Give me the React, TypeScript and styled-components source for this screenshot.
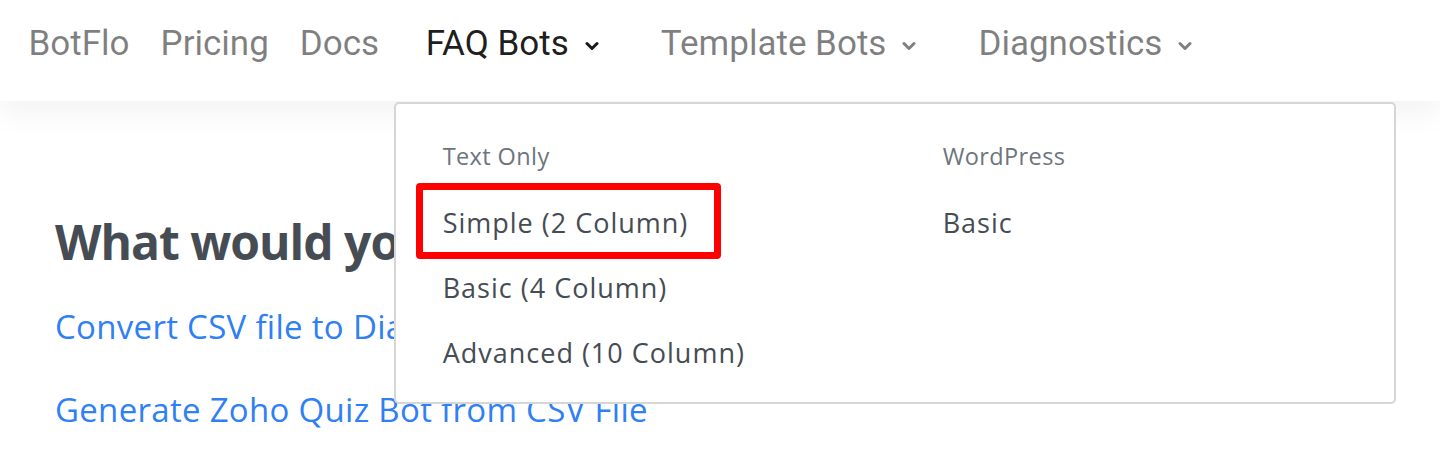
import styled, { createGlobalStyle } from 'styled-components';

const GlobalStyle = createGlobalStyle`
  html, body {
    margin: 0;
    padding: 0;
    background: #fff;
  }
  body {
    font-family: 'Open Sans', 'Liberation Sans', sans-serif;
    overflow: hidden;
  }
`;

const Navbar = styled.nav`
  position: relative;
  z-index: 2;
  display: flex;
  align-items: stretch;
  height: 101px;
  padding-left: 13px;
  background: #fff;
  box-shadow: 0 12px 28px rgba(0, 0, 0, 0.05);
`;

const NavItem = styled.div<{ $dropdown?: boolean }>`
  position: relative;
  display: flex;
  align-items: center;
  padding: 0 ${(p) => (p.$dropdown ? '31px' : '15.5px')};
`;

const NavLink = styled.a<{ $active?: boolean }>`
  display: flex;
  align-items: center;
  gap: 16px;
  padding-bottom: 14px;
  font-family: Roboto, 'Liberation Sans', sans-serif;
  font-size: 35px;
  color: ${(p) => (p.$active ? 'rgba(0, 0, 0, 0.9)' : 'rgba(0, 0, 0, 0.5)')};
  text-decoration: none;
  cursor: pointer;

  svg {
    width: 14px;
    height: 10px;
    margin-top: 4px;
  }
`;

const Menu = styled.div`
  position: absolute;
  top: calc(100% + 1px);
  left: -1px;
  display: grid;
  grid-template-columns: 500px 1fr;
  width: 1002px;
  height: 302px;
  box-sizing: border-box;
  padding: 36px 0 0 47px;
  background: #fff;
  border: 2px solid #d6d6d6;
  border-radius: 5px;
`;

const MenuColumn = styled.div`
  display: flex;
  flex-direction: column;
`;

const MenuHeader = styled.div`
  height: 50px;
  font-size: 23.5px;
  color: #6c757d;
  letter-spacing: 0.4px;
`;

const MenuItem = styled.a<{ $marked?: boolean }>`
  position: relative;
  align-self: flex-start;
  height: 65px;
  line-height: 65px;
  font-size: 27px;
  letter-spacing: 1px;
  color: #454c54;
  text-decoration: none;

  ${(p) =>
    p.$marked &&
    `
    &::after {
      content: '';
      position: absolute;
      top: -7px;
      bottom: -4px;
      left: -27px;
      right: -33px;
      border: 7px solid #f00;
      border-radius: 4px;
    }
  `}
`;

const Main = styled.main`
  padding: 111px 0 0 55px;
`;

const Heading = styled.h1`
  margin: 0 0 33px;
  font-size: 48px;
  font-weight: 700;
  line-height: 60px;
  color: #464c53;
  letter-spacing: -1px;
`;

const LinkList = styled.div`
  display: flex;
  flex-direction: column;
  gap: 39px;
`;

const ToolLink = styled.a`
  font-size: 33px;
  line-height: 44px;
  letter-spacing: 0.3px;
  color: #2f80f4;
  text-decoration: none;
`;

const Chevron = () => (
  <svg viewBox="0 0 14 10" fill="none">
    <path d="M2 2.5 7 7.5 12 2.5" stroke="currentColor" strokeWidth="3" strokeLinecap="round" strokeLinejoin="round" />
  </svg>
);

const App = () => (
  <>
    <GlobalStyle />
    <Navbar>
      <NavItem>
        <NavLink>BotFlo</NavLink>
      </NavItem>
      <NavItem>
        <NavLink>Pricing</NavLink>
      </NavItem>
      <NavItem>
        <NavLink>Docs</NavLink>
      </NavItem>
      <NavItem $dropdown>
        <NavLink $active>
          FAQ Bots
          <Chevron />
        </NavLink>
        <Menu>
          <MenuColumn>
            <MenuHeader>Text Only</MenuHeader>
            <MenuItem $marked>Simple (2 Column)</MenuItem>
            <MenuItem>Basic (4 Column)</MenuItem>
            <MenuItem>Advanced (10 Column)</MenuItem>
          </MenuColumn>
          <MenuColumn>
            <MenuHeader>WordPress</MenuHeader>
            <MenuItem>Basic</MenuItem>
          </MenuColumn>
        </Menu>
      </NavItem>
      <NavItem $dropdown>
        <NavLink>
          Template Bots
          <Chevron />
        </NavLink>
      </NavItem>
      <NavItem $dropdown>
        <NavLink>
          Diagnostics
          <Chevron />
        </NavLink>
      </NavItem>
    </Navbar>
    <Main>
      <Heading>What would you like to do?</Heading>
      <LinkList>
        <ToolLink>Convert CSV file to Dialogflow FAQ Bot</ToolLink>
        <ToolLink>Generate Zoho Quiz Bot from CSV File</ToolLink>
      </LinkList>
    </Main>
  </>
);

export default App;
